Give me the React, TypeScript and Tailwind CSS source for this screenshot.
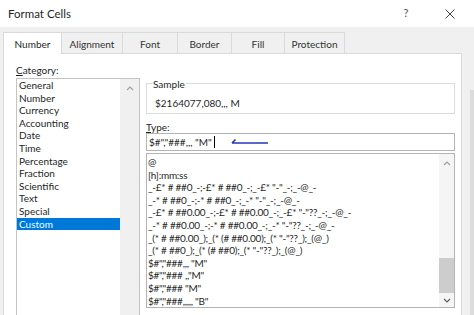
const CATEGORIES = [
  "General", "Number", "Currency", "Accounting", "Date", "Time",
  "Percentage", "Fraction", "Scientific", "Text", "Special", "Custom",
];

const TYPES = [
  "@",
  "[h]:mm:ss",
  '_-£* # ##0_-;-£* # ##0_-;_-£* "-"_-;_-@_-',
  '_-* # ##0_-;-* # ##0_-;_-* "-"_-;_-@_-',
  '_-£* # ##0.00_-;-£* # ##0.00_-;_-£* "-"??_-;_-@_-',
  '_-* # ##0.00_-;-* # ##0.00_-;_-* "-"??_-;_-@_-',
  '_(* # ##0.00_);_(* (# ##0.00);_(* "-"??_);_(@_)',
  '_(* # ##0_);_(* (# ##0);_(* "-"??_);_(@_)',
  '$#","###,,, "M"',
  '$#","### ,,"M"',
  '$#","### "M"',
  '$#","###,,,,, "B"',
];

const TABS = [
  { label: "Number", w: "w-[59px]" },
  { label: "Alignment", w: "w-[61px]" },
  { label: "Font", w: "w-[55px]" },
  { label: "Border", w: "w-[54px]" },
  { label: "Fill", w: "w-[53px]" },
  { label: "Protection", w: "w-[60px]" },
];

function Chevron({ down = false }: { down?: boolean }) {
  return (
    <svg width="8" height="5" viewBox="0 0 8 5" className="block">
      <polyline
        points={down ? "1,1 4,4 7,1" : "1,4 4,1 7,4"}
        fill="none"
        stroke={down ? "#606060" : "#a0a0a0"}
        strokeWidth="1.2"
      />
    </svg>
  );
}

export default function App() {
  return (
    <div className="w-[474px] h-[315px] overflow-hidden bg-[#f0f0f0] text-[#1f1f1f] font-['Lato','Noto_Sans',sans-serif] flex flex-col">
      {/* Title bar */}
      <div className="h-[27px] bg-white flex items-center pl-[8px] pr-[18px] shrink-0">
        <span className="text-[11.5px]">Format Cells</span>
        <div className="ml-auto flex items-center gap-[31px]">
          <span className="w-[14px] text-center text-[11px] text-[#555]">?</span>
          <svg width="12" height="12" viewBox="0 0 12 12" className="block">
            <path d="M1.5 1.5 L10.5 10.5 M10.5 1.5 L1.5 10.5" stroke="#444" strokeWidth="1" />
          </svg>
        </div>
      </div>

      <div className="flex flex-1 min-h-0">
        <div className="w-[462px] pl-[3px] pt-[5px] flex flex-col">
          {/* Tabs */}
          <div className="flex items-end h-[21px] shrink-0">
            {TABS.map((t, i) =>
              i === 0 ? (
                <div
                  key={t.label}
                  className={`${t.w} h-[22px] -mb-px relative z-10 bg-white border-x border-t border-[#d9d9d9] flex items-center justify-center pt-[2px] text-[10px]`}
                >
                  {t.label}
                </div>
              ) : (
                <div
                  key={t.label}
                  className={`${t.w} h-[21px] border-t border-r border-[#dadada] flex items-center justify-center pt-[2px] text-[10px] text-[#333]`}
                >
                  {t.label}
                </div>
              )
            )}
          </div>

          {/* Panel */}
          <div className="flex-1 bg-white border-x border-t border-[#d9d9d9] flex pl-[12px]">
            {/* Category */}
            <div className="w-[124px] pt-[9px] flex flex-col">
              <div className="text-[10px] leading-[14px]">
                <span className="underline">C</span>ategory:
              </div>
              <div className="mt-px h-[250px] border border-[#c4c4c4] flex">
                <div className="flex-1 flex flex-col">
                  {CATEGORIES.map(c => (
                    <div
                      key={c}
                      className={`h-[12.6px] leading-[12.6px] pl-[2px] text-[10px] ${
                        c === "Custom" ? "bg-[#0078d7] text-white" : ""
                      }`}
                    >
                      {c}
                    </div>
                  ))}
                </div>
                <div className="w-[19px] bg-[#f0f0f0] flex justify-center pt-[7px]">
                  <Chevron />
                </div>
              </div>
            </div>

            {/* Right column */}
            <div className="ml-[6px] w-[309px] flex flex-col">
              <div className="relative mt-[29px] h-[31px] border border-[#dcdcdc] pl-[8px] pt-[13px] text-[10px] leading-[12px]">
                <span className="absolute left-[5px] -top-[6px] bg-white px-[1px]">Sample</span>
                $2164077,080,,, M
              </div>

              <div className="mt-[7px] text-[10px] leading-[12px]">
                <span className="underline">T</span>ype:
              </div>
              <div className="h-[18px] border border-[#b4b4b4] flex items-center pl-[2px] text-[10px]">
                <span>$#","###,,, "M"</span>
                <span className="ml-[2px] w-px h-[12px] bg-black" />
                <svg width="38" height="8" viewBox="0 0 38 8" className="ml-[16px] block">
                  <path d="M1 5 L37 5 M1 5 L4.5 1.5" stroke="#2438b8" strokeWidth="1.6" fill="none" />
                </svg>
              </div>

              <div className="mt-[2px] h-[155px] border border-[#b4b4b4] flex">
                <div className="flex-1 flex flex-col pt-[2px] pl-px">
                  {TYPES.map(t => (
                    <div key={t} className="h-[12.6px] leading-[12.6px] text-[10px] tracking-[-0.25px] whitespace-pre">
                      {t}
                    </div>
                  ))}
                </div>
                <div className="w-[15px] bg-[#f5f5f5] flex flex-col">
                  <div className="h-[17px] flex justify-center pt-[7px]">
                    <Chevron />
                  </div>
                  <div className="flex-1 flex flex-col">
                    <div className="mt-auto h-[35px] bg-[#cdcdcd]" />
                  </div>
                  <div className="h-[14px] flex justify-center items-center">
                    <Chevron down />
                  </div>
                </div>
              </div>
            </div>
          </div>
        </div>

        {/* Window edge */}
        <div className="flex-1 flex justify-end">
          <div className="w-[4px] mt-[63px] bg-[#dcdcdc]" />
        </div>
      </div>
    </div>
  );
}
